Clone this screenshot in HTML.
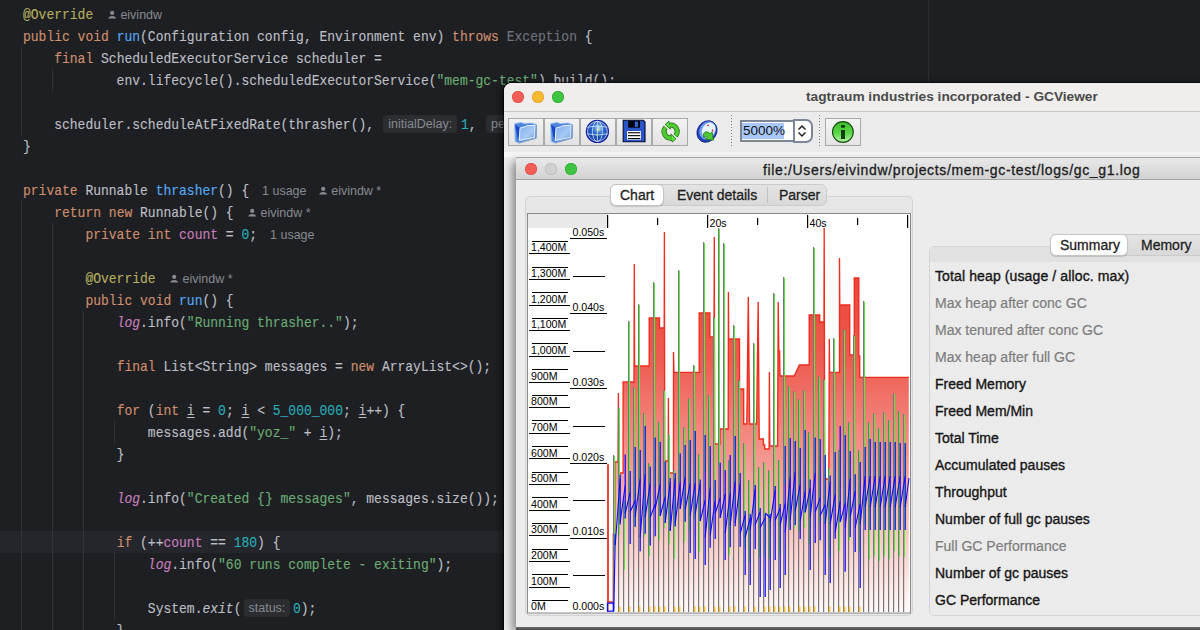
<!DOCTYPE html>
<html><head><meta charset="utf-8"><style>
*{margin:0;padding:0;box-sizing:border-box}
html,body{width:1200px;height:630px;overflow:hidden;background:#1E1F22}
#ed{position:absolute;left:0;top:0;width:1200px;height:630px;background:#1E1F22}
.cur{position:absolute;left:0;top:531px;width:1200px;height:22px;background:#24262B}
.margin{position:absolute;left:928px;top:0;width:1px;height:630px;background:#2B2D30}
.gd{position:absolute;width:1px;background:#313337}
#code{position:absolute;left:22.7px;top:0}
.ln{position:absolute;left:0;height:22px;line-height:22px;white-space:pre;font-family:"Liberation Mono",monospace;font-size:15px;color:#BCBEC4;transform:scaleX(0.8667);transform-origin:0 0;-webkit-text-stroke:0.15px currentColor}
.au{position:absolute;height:22px;line-height:22px;white-space:pre;font-family:"Liberation Sans",sans-serif;font-size:12.5px;color:#868A91}
.pi{position:absolute}
.inl{position:absolute;height:18px;line-height:18px;background:#2B2D30;color:#868A91;font-family:"Liberation Sans",sans-serif;font-size:12.5px;border-radius:4px;padding-left:5px;white-space:pre;overflow:hidden}
</style></head>
<body>
<div id="ed">
<div class="cur"></div>
<div class="margin"></div>
<div class="gd" style="left:21.0px;top:47px;height:88px"></div><div class="gd" style="left:21.0px;top:201px;height:429px"></div><div class="gd" style="left:52.0px;top:69px;height:22px"></div><div class="gd" style="left:52.0px;top:223px;height:407px"></div><div class="gd" style="left:83.0px;top:311px;height:319px"></div><div class="gd" style="left:114.0px;top:421px;height:22px"></div><div class="gd" style="left:114.0px;top:553px;height:66px"></div>
<div id="code"><div class="ln" style="top:5.0px"><span style="color:#B3AE60;">@Override</span></div>
<div class="ln" style="top:27.0px"><span style="color:#CF8E6D;">public void </span><span style="color:#56A8F5;">run</span>(Configuration config, Environment env) <span style="color:#CF8E6D;">throws </span><span style="color:#6F737A;">Exception</span> {</div>
<div class="ln" style="top:49.0px">    <span style="color:#CF8E6D;">final </span>ScheduledExecutorService scheduler =</div>
<div class="ln" style="top:71.0px">            env.lifecycle().scheduledExecutorService(<span style="color:#6AAB73;">&quot;mem-gc-test&quot;</span>).build();</div>
<div class="ln" style="top:115.0px">    scheduler.scheduleAtFixedRate(thrasher(),</div>
<div class="ln" style="top:137.0px">}</div>
<div class="ln" style="top:181.0px"><span style="color:#CF8E6D;">private </span>Runnable <span style="color:#56A8F5;">thrasher</span>() {</div>
<div class="ln" style="top:203.0px">    <span style="color:#CF8E6D;">return new </span>Runnable() {</div>
<div class="ln" style="top:225.0px">        <span style="color:#CF8E6D;">private int </span><span style="color:#C77DBB;">count</span> = <span style="color:#2AACB8;">0</span>;</div>
<div class="ln" style="top:269.0px">        <span style="color:#B3AE60;">@Override</span></div>
<div class="ln" style="top:291.0px">        <span style="color:#CF8E6D;">public void </span><span style="color:#56A8F5;">run</span>() {</div>
<div class="ln" style="top:313.0px">            <span style="color:#C77DBB;font-style:italic;">log</span>.info(<span style="color:#6AAB73;">&quot;Running thrasher..&quot;</span>);</div>
<div class="ln" style="top:357.0px">            <span style="color:#CF8E6D;">final </span>List&lt;String> messages = <span style="color:#CF8E6D;">new </span>ArrayList&lt;>();</div>
<div class="ln" style="top:401.0px">            <span style="color:#CF8E6D;">for </span>(<span style="color:#CF8E6D;">int </span><span style="text-decoration:underline;text-underline-offset:2px">i</span> = <span style="color:#2AACB8;">0</span>; <span style="text-decoration:underline;text-underline-offset:2px">i</span> &lt; <span style="color:#2AACB8;">5_000_000</span>; <span style="text-decoration:underline;text-underline-offset:2px">i</span>++) {</div>
<div class="ln" style="top:423.0px">                messages.add(<span style="color:#6AAB73;">&quot;yoz_&quot;</span> + <span style="text-decoration:underline;text-underline-offset:2px">i</span>);</div>
<div class="ln" style="top:445.0px">            }</div>
<div class="ln" style="top:489.0px">            <span style="color:#C77DBB;font-style:italic;">log</span>.info(<span style="color:#6AAB73;">&quot;Created {} messages&quot;</span>, messages.size());</div>
<div class="ln" style="top:533.0px">            <span style="color:#CF8E6D;">if </span>(++<span style="color:#C77DBB;">count</span> == <span style="color:#2AACB8;">180</span>) {</div>
<div class="ln" style="top:555.0px">                <span style="color:#C77DBB;font-style:italic;">log</span>.info(<span style="color:#6AAB73;">&quot;60 runs complete - exiting&quot;</span>);</div>
<div class="ln" style="top:599.0px">                System.<span style="color:#BCBEC4;font-style:italic;">exit</span>(</div>
<div class="ln" style="top:621.0px">            }</div>
<div class="ln" style="left:438.2px;top:115.0px"><span style="color:#2AACB8;">1</span>, </div>
<div class="ln" style="left:270.5px;top:599.0px"><span style="color:#2AACB8;">0</span>);</div></div>
<svg class="pi" style="left:107.9px;top:10px" width="9" height="9" viewBox="0 0 9 9"><circle cx="4.2" cy="2.9" r="2.1" fill="#868A91"/><path d="M0.3,8.6 Q0.6,5.9 4.2,5.9 Q7.8,5.9 8.1,8.6 Z" fill="#868A91"/></svg>
<div class="au" style="left:120.4px;top:4px">eivindw</div>
<div class="au" style="left:262.0px;top:180px">1 usage</div>
<svg class="pi" style="left:318.8px;top:186px" width="9" height="9" viewBox="0 0 9 9"><circle cx="4.2" cy="2.9" r="2.1" fill="#868A91"/><path d="M0.3,8.6 Q0.6,5.9 4.2,5.9 Q7.8,5.9 8.1,8.6 Z" fill="#868A91"/></svg>
<div class="au" style="left:331.2px;top:180px">eivindw *</div>
<svg class="pi" style="left:248.0px;top:208px" width="9" height="9" viewBox="0 0 9 9"><circle cx="4.2" cy="2.9" r="2.1" fill="#868A91"/><path d="M0.3,8.6 Q0.6,5.9 4.2,5.9 Q7.8,5.9 8.1,8.6 Z" fill="#868A91"/></svg>
<div class="au" style="left:260.5px;top:202px">eivindw *</div>
<div class="au" style="left:270.0px;top:224px">1 usage</div>
<svg class="pi" style="left:170.0px;top:274px" width="9" height="9" viewBox="0 0 9 9"><circle cx="4.2" cy="2.9" r="2.1" fill="#868A91"/><path d="M0.3,8.6 Q0.6,5.9 4.2,5.9 Q7.8,5.9 8.1,8.6 Z" fill="#868A91"/></svg>
<div class="au" style="left:182.5px;top:268px">eivindw *</div>
<div class="inl" style="left:383.3px;top:115px;width:74.0px">initialDelay:</div>
<div class="inl" style="left:486.0px;top:115px;width:74.0px">period:</div>
<div class="inl" style="left:243.5px;top:599px;width:46.5px">status:</div>
</div>
<div style="position:absolute;left:504px;top:83px;width:700px;height:560px;background:#ececec;border-radius:8px 0 0 0;box-shadow:-1px -1px 0 rgba(0,0,0,.55),-3px 0 6px rgba(0,0,0,.55);"></div>
<div style="position:absolute;left:504px;top:83px;width:700px;height:28px;background:#efeeed;border-radius:8px 0 0 0;"></div>
<div style="position:absolute;left:504px;top:111px;width:700px;height:1px;background:#c6c6c6;"></div>
<div style="position:absolute;left:512px;top:91px;width:12px;height:12px;border-radius:50%;background:#f25f58;box-shadow:inset 0 0 0 .6px #d94a43;"></div>
<div style="position:absolute;left:532px;top:91px;width:12px;height:12px;border-radius:50%;background:#f8b932;box-shadow:inset 0 0 0 .6px #db9d26;"></div>
<div style="position:absolute;left:552px;top:91px;width:12px;height:12px;border-radius:50%;background:#3ec440;box-shadow:inset 0 0 0 .6px #2aa52d;"></div>
<div style="position:absolute;left:806px;top:89px;white-space:nowrap;font-family:'Liberation Sans',sans-serif;font-size:13.7px;font-weight:bold;color:#4a4a4a;line-height:16px;">tagtraum industries incorporated - GCViewer</div>
<div style="position:absolute;left:504px;top:112px;width:700px;height:41px;background:#ebebeb;"></div>
<div style="position:absolute;left:504px;top:152px;width:700px;height:5px;background:#f6f6f6;"></div>
<div style="position:absolute;left:508px;top:118px;width:36px;height:28px;box-sizing:border-box;border:1px solid #a9a9a9;background:linear-gradient(#f2f2f2,#e2e2e2);"></div>
<div style="position:absolute;left:544px;top:118px;width:36px;height:28px;box-sizing:border-box;border:1px solid #a9a9a9;background:linear-gradient(#f2f2f2,#e2e2e2);"></div>
<div style="position:absolute;left:580px;top:118px;width:36px;height:28px;box-sizing:border-box;border:1px solid #a9a9a9;background:linear-gradient(#f2f2f2,#e2e2e2);"></div>
<div style="position:absolute;left:616px;top:118px;width:36px;height:28px;box-sizing:border-box;border:1px solid #a9a9a9;background:linear-gradient(#f2f2f2,#e2e2e2);"></div>
<div style="position:absolute;left:652px;top:118px;width:36px;height:28px;box-sizing:border-box;border:1px solid #a9a9a9;background:linear-gradient(#f2f2f2,#e2e2e2);"></div>
<div id="icons"></div>
<div style="position:absolute;left:731px;top:115px;width:1px;height:31px;background:repeating-linear-gradient(#777 0 1px,transparent 1px 3px);"></div>
<div style="position:absolute;left:819px;top:115px;width:1px;height:31px;background:repeating-linear-gradient(#777 0 1px,transparent 1px 3px);"></div>
<div style="position:absolute;left:740px;top:120px;width:54px;height:22px;box-sizing:border-box;border:2px solid #7d8696;border-right:1px solid #7d8696;background:#fff;"></div>
<div style="position:absolute;left:742px;top:123px;width:42px;height:16px;background:#a8c8fb;"></div>
<div style="position:absolute;left:743px;top:123px;white-space:nowrap;font-family:'Liberation Sans',sans-serif;font-size:13.5px;color:#111;line-height:16px;">5000%</div>
<div style="position:absolute;left:793px;top:119px;width:20px;height:24px;box-sizing:border-box;border:2px solid #7d8696;border-radius:0 7px 7px 0;background:#fff;"></div>
<svg style="position:absolute;left:796px;top:124px" width="12" height="14"><path d="M2.5 5.5 L6 2 L9.5 5.5 M2.5 8.5 L6 12 L9.5 8.5" fill="none" stroke="#222" stroke-width="1.5"/></svg>
<div style="position:absolute;left:825px;top:118px;width:36px;height:28px;box-sizing:border-box;border:1px solid #a9a9a9;background:linear-gradient(#f4f4f4,#e4e4e4);"></div>
<div style="position:absolute;left:516px;top:157px;width:700px;height:471px;background:#ececec;border-radius:5px 0 0 0;box-shadow:-4px 4px 9px rgba(0,0,0,.42);"></div>
<div style="position:absolute;left:516px;top:157px;width:700px;height:1.2px;background:#a9a9a9;border-radius:5px 0 0 0;"></div>
<div style="position:absolute;left:516px;top:158px;width:700px;height:21px;background:linear-gradient(#e9e9e9,#d2d2d2);border-radius:5px 0 0 0;"></div>
<div style="position:absolute;left:516px;top:179px;width:700px;height:1px;background:#a3a3a3;"></div>
<div style="position:absolute;left:525px;top:163px;width:12px;height:12px;border-radius:50%;background:#f25f58;box-shadow:inset 0 0 0 .6px #d94a43;"></div>
<div style="position:absolute;left:545px;top:163px;width:12px;height:12px;border-radius:50%;background:#d0d0d0;box-shadow:inset 0 0 0 .6px #b3b3b3;"></div>
<div style="position:absolute;left:565px;top:163px;width:12px;height:12px;border-radius:50%;background:#3ec440;box-shadow:inset 0 0 0 .6px #2aa52d;"></div>
<div style="position:absolute;left:763px;top:162px;white-space:nowrap;font-family:'Liberation Sans',sans-serif;font-size:14px;letter-spacing:0.65px;color:#1c1c1c;line-height:16px;-webkit-text-stroke:0.3px #1c1c1c;">file:/Users/eivindw/projects/mem-gc-test/logs/gc_g1.log</div>
<div style="position:absolute;left:516px;top:627px;width:700px;height:3px;background:linear-gradient(#6a6a6a,#4a4a4a);"></div>
<div style="position:absolute;left:525px;top:196px;width:388px;height:420px;box-sizing:border-box;border:1px solid #d4d4d4;border-radius:5px;background:#e6e6e6;"></div>
<div style="position:absolute;left:610px;top:184px;width:217px;height:22px;box-sizing:border-box;border:1px solid #cbcbcb;border-radius:6px;background:linear-gradient(#e3e3e3,#d9d9d9);"></div>
<div style="position:absolute;left:610px;top:184px;width:54px;height:22px;box-sizing:border-box;border:1px solid #c4c4c4;border-radius:6px;background:#fff;box-shadow:0 1px 1px rgba(0,0,0,.15);"></div>
<div style="position:absolute;left:767px;top:187px;width:1px;height:16px;background:#c2c2c2;"></div>
<div style="position:absolute;left:620px;top:187px;white-space:nowrap;font-family:'Liberation Sans',sans-serif;font-size:14px;color:#1e1e1e;line-height:16px;-webkit-text-stroke:0.3px #1e1e1e;">Chart</div>
<div style="position:absolute;left:677px;top:187px;white-space:nowrap;font-family:'Liberation Sans',sans-serif;font-size:14px;color:#1e1e1e;line-height:16px;-webkit-text-stroke:0.3px #1e1e1e;">Event details</div>
<div style="position:absolute;left:779px;top:187px;white-space:nowrap;font-family:'Liberation Sans',sans-serif;font-size:14px;color:#1e1e1e;line-height:16px;-webkit-text-stroke:0.3px #1e1e1e;">Parser</div>
<div style="position:absolute;left:929px;top:246px;width:300px;height:370px;box-sizing:border-box;border:1px solid #d4d4d4;border-radius:5px;background:#ebebeb;"></div>
<div style="position:absolute;left:930px;top:247px;width:300px;height:15px;background:#e1e1e1;"></div>
<div style="position:absolute;left:1050px;top:234px;width:160px;height:22px;box-sizing:border-box;border:1px solid #cbcbcb;border-radius:6px;background:linear-gradient(#e3e3e3,#d9d9d9);"></div>
<div style="position:absolute;left:1050px;top:234px;width:78px;height:22px;box-sizing:border-box;border:1px solid #c4c4c4;border-radius:6px;background:#fff;box-shadow:0 1px 1px rgba(0,0,0,.15);"></div>
<div style="position:absolute;left:1060px;top:237px;white-space:nowrap;font-family:'Liberation Sans',sans-serif;font-size:14px;color:#1e1e1e;line-height:16px;-webkit-text-stroke:0.3px #1e1e1e;">Summary</div>
<div style="position:absolute;left:1141px;top:237px;white-space:nowrap;font-family:'Liberation Sans',sans-serif;font-size:14px;color:#1e1e1e;line-height:16px;-webkit-text-stroke:0.3px #1e1e1e;">Memory</div>
<div style="position:absolute;left:935px;top:268px;white-space:nowrap;font-family:'Liberation Sans',sans-serif;font-size:14px;letter-spacing:0.12px;line-height:16px;color:#161616;-webkit-text-stroke:0.35px #161616;">Total heap (usage / alloc. max)</div>
<div style="position:absolute;left:935px;top:295px;white-space:nowrap;font-family:'Liberation Sans',sans-serif;font-size:14px;letter-spacing:0;line-height:16px;color:#7d7d7d;-webkit-text-stroke:0.2px #7d7d7d;">Max heap after conc GC</div>
<div style="position:absolute;left:935px;top:322px;white-space:nowrap;font-family:'Liberation Sans',sans-serif;font-size:14px;letter-spacing:0;line-height:16px;color:#7d7d7d;-webkit-text-stroke:0.2px #7d7d7d;">Max tenured after conc GC</div>
<div style="position:absolute;left:935px;top:349px;white-space:nowrap;font-family:'Liberation Sans',sans-serif;font-size:14px;letter-spacing:0;line-height:16px;color:#7d7d7d;-webkit-text-stroke:0.2px #7d7d7d;">Max heap after full GC</div>
<div style="position:absolute;left:935px;top:376px;white-space:nowrap;font-family:'Liberation Sans',sans-serif;font-size:14px;letter-spacing:0;line-height:16px;color:#161616;-webkit-text-stroke:0.35px #161616;">Freed Memory</div>
<div style="position:absolute;left:935px;top:403px;white-space:nowrap;font-family:'Liberation Sans',sans-serif;font-size:14px;letter-spacing:0;line-height:16px;color:#161616;-webkit-text-stroke:0.35px #161616;">Freed Mem/Min</div>
<div style="position:absolute;left:935px;top:430px;white-space:nowrap;font-family:'Liberation Sans',sans-serif;font-size:14px;letter-spacing:0;line-height:16px;color:#161616;-webkit-text-stroke:0.35px #161616;">Total Time</div>
<div style="position:absolute;left:935px;top:457px;white-space:nowrap;font-family:'Liberation Sans',sans-serif;font-size:14px;letter-spacing:0;line-height:16px;color:#161616;-webkit-text-stroke:0.35px #161616;">Accumulated pauses</div>
<div style="position:absolute;left:935px;top:484px;white-space:nowrap;font-family:'Liberation Sans',sans-serif;font-size:14px;letter-spacing:0;line-height:16px;color:#161616;-webkit-text-stroke:0.35px #161616;">Throughput</div>
<div style="position:absolute;left:935px;top:511px;white-space:nowrap;font-family:'Liberation Sans',sans-serif;font-size:14px;letter-spacing:0;line-height:16px;color:#161616;-webkit-text-stroke:0.35px #161616;">Number of full gc pauses</div>
<div style="position:absolute;left:935px;top:538px;white-space:nowrap;font-family:'Liberation Sans',sans-serif;font-size:14px;letter-spacing:0;line-height:16px;color:#7d7d7d;-webkit-text-stroke:0.2px #7d7d7d;">Full GC Performance</div>
<div style="position:absolute;left:935px;top:565px;white-space:nowrap;font-family:'Liberation Sans',sans-serif;font-size:14px;letter-spacing:0;line-height:16px;color:#161616;-webkit-text-stroke:0.35px #161616;">Number of gc pauses</div>
<div style="position:absolute;left:935px;top:592px;white-space:nowrap;font-family:'Liberation Sans',sans-serif;font-size:14px;letter-spacing:0;line-height:16px;color:#161616;-webkit-text-stroke:0.35px #161616;">GC Performance</div><svg style="position:absolute;left:527px;top:213px" width="384" height="401" viewBox="527 213 384 401" shape-rendering="auto">
<defs><linearGradient id="hg" x1="0" y1="228" x2="0" y2="612" gradientUnits="userSpaceOnUse"><stop offset="0" stop-color="#e8382b"/><stop offset="0.35" stop-color="#ee5d52"/><stop offset="0.65" stop-color="#f6a29c"/><stop offset="1" stop-color="#fffafa"/></linearGradient></defs>
<rect x="527.5" y="213.5" width="383" height="399.5" fill="#fff" stroke="#8a8a8a" stroke-width="1"/>
<rect x="528" y="214" width="79.5" height="14" fill="#e9e9e9"/>
<polygon points="607.8,612.0 607.8,465.0 608.2,465.0 608.2,602.0 613.3,602.0 613.3,534.0 614.8,534.0 614.8,462.0 618.0,462.0 618.4,393.0 618.8,473.0 623.1,473.0 623.1,382.0 634.0,382.0 634.3,264.0 634.6,366.0 649.2,366.0 649.2,318.0 659.5,318.0 659.5,328.0 664.2,328.0 664.4,232.0 664.7,461.0 668.2,461.0 668.4,398.0 668.7,473.0 673.5,473.0 673.5,352.0 674.0,372.4 699.2,372.4 699.2,313.0 709.9,313.0 709.9,337.0 714.0,337.0 714.3,237.0 714.7,444.0 720.0,444.0 720.0,429.0 728.2,429.0 728.4,292.0 728.7,339.0 739.5,339.0 739.5,389.0 743.7,389.0 743.7,424.0 746.8,424.0 748.3,297.0 749.6,424.0 756.6,424.0 758.2,302.0 759.2,439.0 763.4,439.0 763.4,445.0 764.7,445.0 764.7,449.0 769.1,449.0 769.4,372.0 769.8,446.0 773.0,446.0 777.6,446.0 778.2,302.0 778.8,351.0 779.6,351.0 780.0,376.0 794.2,376.0 799.4,365.0 809.2,365.0 809.2,315.0 819.7,315.0 819.7,322.0 824.0,322.0 824.2,228.0 824.7,479.0 828.8,479.0 829.3,339.0 829.6,372.4 839.5,372.4 839.5,258.0 839.8,305.0 849.7,305.0 849.7,355.0 854.3,355.0 854.3,278.0 858.8,278.0 858.8,356.0 859.7,356.0 859.7,377.3 908.8,377.3 908.8,612.0" fill="url(#hg)" stroke="none"/>
<polyline points="607.8,612.0 607.8,465.0 608.2,465.0 608.2,602.0 613.3,602.0 613.3,534.0 614.8,534.0 614.8,462.0 618.0,462.0 618.4,393.0 618.8,473.0 623.1,473.0 623.1,382.0 634.0,382.0 634.3,264.0 634.6,366.0 649.2,366.0 649.2,318.0 659.5,318.0 659.5,328.0 664.2,328.0 664.4,232.0 664.7,461.0 668.2,461.0 668.4,398.0 668.7,473.0 673.5,473.0 673.5,352.0 674.0,372.4 699.2,372.4 699.2,313.0 709.9,313.0 709.9,337.0 714.0,337.0 714.3,237.0 714.7,444.0 720.0,444.0 720.0,429.0 728.2,429.0 728.4,292.0 728.7,339.0 739.5,339.0 739.5,389.0 743.7,389.0 743.7,424.0 746.8,424.0 748.3,297.0 749.6,424.0 756.6,424.0 758.2,302.0 759.2,439.0 763.4,439.0 763.4,445.0 764.7,445.0 764.7,449.0 769.1,449.0 769.4,372.0 769.8,446.0 773.0,446.0 777.6,446.0 778.2,302.0 778.8,351.0 779.6,351.0 780.0,376.0 794.2,376.0 799.4,365.0 809.2,365.0 809.2,315.0 819.7,315.0 819.7,322.0 824.0,322.0 824.2,228.0 824.7,479.0 828.8,479.0 829.3,339.0 829.6,372.4 839.5,372.4 839.5,258.0 839.8,305.0 849.7,305.0 849.7,355.0 854.3,355.0 854.3,278.0 858.8,278.0 858.8,356.0 859.7,356.0 859.7,377.3 908.8,377.3" fill="none" stroke="#ee2b1c" stroke-width="1.35" stroke-linejoin="miter"/>
<rect x="613" y="455.0" width="1.2" height="157.0" fill="#777"/><rect x="618" y="407.0" width="1.2" height="205.0" fill="#777"/><rect x="623" y="500.0" width="1.2" height="112.0" fill="#777"/><rect x="628" y="321.0" width="1.2" height="291.0" fill="#777"/><rect x="633" y="387.0" width="1.2" height="225.0" fill="#777"/><rect x="638" y="304.0" width="1.2" height="308.0" fill="#777"/><rect x="643" y="413.0" width="1.2" height="199.0" fill="#777"/><rect x="648" y="463.0" width="1.2" height="149.0" fill="#777"/><rect x="653" y="282.0" width="1.2" height="330.0" fill="#777"/><rect x="658" y="422.0" width="1.2" height="190.0" fill="#777"/><rect x="663" y="390.0" width="1.2" height="222.0" fill="#777"/><rect x="668" y="434.0" width="1.2" height="178.0" fill="#777"/><rect x="673" y="470.0" width="1.2" height="142.0" fill="#777"/><rect x="678" y="270.0" width="1.2" height="342.0" fill="#777"/><rect x="683" y="427.0" width="1.2" height="185.0" fill="#777"/><rect x="688" y="398.0" width="1.2" height="214.0" fill="#777"/><rect x="693" y="365.0" width="1.2" height="247.0" fill="#777"/><rect x="698" y="454.0" width="1.2" height="158.0" fill="#777"/><rect x="703" y="242.0" width="1.2" height="370.0" fill="#777"/><rect x="708" y="395.0" width="1.2" height="217.0" fill="#777"/><rect x="713" y="317.0" width="1.2" height="295.0" fill="#777"/><rect x="718" y="228.0" width="1.2" height="384.0" fill="#777"/><rect x="723" y="243.0" width="1.2" height="369.0" fill="#777"/><rect x="728" y="460.0" width="1.2" height="152.0" fill="#777"/><rect x="733" y="325.0" width="1.2" height="287.0" fill="#777"/><rect x="738" y="380.0" width="1.2" height="232.0" fill="#777"/><rect x="743" y="443.0" width="1.2" height="169.0" fill="#777"/><rect x="748" y="480.0" width="1.2" height="132.0" fill="#777"/><rect x="753" y="343.0" width="1.2" height="269.0" fill="#777"/><rect x="758" y="467.0" width="1.2" height="145.0" fill="#777"/><rect x="763" y="462.0" width="1.2" height="150.0" fill="#777"/><rect x="768" y="470.0" width="1.2" height="142.0" fill="#777"/><rect x="773" y="293.0" width="1.2" height="319.0" fill="#777"/><rect x="778" y="460.0" width="1.2" height="152.0" fill="#777"/><rect x="783" y="277.0" width="1.2" height="335.0" fill="#777"/><rect x="788" y="386.0" width="1.2" height="226.0" fill="#777"/><rect x="793" y="391.0" width="1.2" height="221.0" fill="#777"/><rect x="798" y="399.0" width="1.2" height="213.0" fill="#777"/><rect x="803" y="390.0" width="1.2" height="222.0" fill="#777"/><rect x="808" y="432.0" width="1.2" height="180.0" fill="#777"/><rect x="813" y="247.0" width="1.2" height="365.0" fill="#777"/><rect x="818" y="376.0" width="1.2" height="236.0" fill="#777"/><rect x="823" y="379.0" width="1.2" height="233.0" fill="#777"/><rect x="828" y="468.0" width="1.2" height="144.0" fill="#777"/><rect x="833" y="338.0" width="1.2" height="274.0" fill="#777"/><rect x="838" y="450.0" width="1.2" height="162.0" fill="#777"/><rect x="843" y="329.0" width="1.2" height="283.0" fill="#777"/><rect x="848" y="422.0" width="1.2" height="190.0" fill="#777"/><rect x="853" y="335.0" width="1.2" height="277.0" fill="#777"/><rect x="858" y="450.0" width="1.2" height="162.0" fill="#777"/><rect x="863" y="301.0" width="1.2" height="311.0" fill="#777"/><rect x="868" y="422.0" width="1.2" height="190.0" fill="#777"/><rect x="873" y="413.0" width="1.2" height="199.0" fill="#777"/><rect x="878" y="428.0" width="1.2" height="184.0" fill="#777"/><rect x="883" y="412.0" width="1.2" height="200.0" fill="#777"/><rect x="888" y="420.0" width="1.2" height="192.0" fill="#777"/><rect x="893" y="393.0" width="1.2" height="219.0" fill="#777"/><rect x="898" y="411.0" width="1.2" height="201.0" fill="#777"/><rect x="903" y="414.0" width="1.2" height="198.0" fill="#777"/>
<rect x="614" y="456.0" width="1" height="96.7" fill="#55ea3c"/><rect x="619" y="408.0" width="1" height="126.5" fill="#55ea3c"/><rect x="624" y="501.0" width="1" height="68.8" fill="#55ea3c"/><rect x="629" y="322.0" width="1" height="179.8" fill="#55ea3c"/><rect x="634" y="388.0" width="1" height="138.9" fill="#55ea3c"/><rect x="639" y="305.0" width="1" height="190.3" fill="#55ea3c"/><rect x="644" y="414.0" width="1" height="122.8" fill="#55ea3c"/><rect x="649" y="464.0" width="1" height="91.8" fill="#55ea3c"/><rect x="654" y="283.0" width="1" height="204.0" fill="#55ea3c"/><rect x="659" y="423.0" width="1" height="117.2" fill="#55ea3c"/><rect x="664" y="391.0" width="1" height="137.0" fill="#55ea3c"/><rect x="669" y="435.0" width="1" height="109.7" fill="#55ea3c"/><rect x="674" y="471.0" width="1" height="87.4" fill="#55ea3c"/><rect x="679" y="271.0" width="1" height="211.4" fill="#55ea3c"/><rect x="684" y="428.0" width="1" height="114.1" fill="#55ea3c"/><rect x="689" y="399.0" width="1" height="132.1" fill="#55ea3c"/><rect x="694" y="366.0" width="1" height="152.5" fill="#55ea3c"/><rect x="699" y="455.0" width="1" height="97.3" fill="#55ea3c"/><rect x="704" y="243.0" width="1" height="228.8" fill="#55ea3c"/><rect x="709" y="396.0" width="1" height="133.9" fill="#55ea3c"/><rect x="714" y="318.0" width="1" height="182.3" fill="#55ea3c"/><rect x="719" y="229.0" width="1" height="237.5" fill="#55ea3c"/><rect x="724" y="244.0" width="1" height="228.2" fill="#55ea3c"/><rect x="729" y="461.0" width="1" height="93.6" fill="#55ea3c"/><rect x="734" y="326.0" width="1" height="177.3" fill="#55ea3c"/><rect x="739" y="381.0" width="1" height="143.2" fill="#55ea3c"/><rect x="744" y="444.0" width="1" height="104.2" fill="#55ea3c"/><rect x="749" y="481.0" width="1" height="81.2" fill="#55ea3c"/><rect x="754" y="344.0" width="1" height="166.2" fill="#55ea3c"/><rect x="759" y="468.0" width="1" height="89.3" fill="#55ea3c"/><rect x="764" y="463.0" width="1" height="92.4" fill="#55ea3c"/><rect x="769" y="471.0" width="1" height="87.4" fill="#55ea3c"/><rect x="774" y="294.0" width="1" height="197.2" fill="#55ea3c"/><rect x="779" y="461.0" width="1" height="93.6" fill="#55ea3c"/><rect x="784" y="278.0" width="1" height="207.1" fill="#55ea3c"/><rect x="789" y="387.0" width="1" height="139.5" fill="#55ea3c"/><rect x="794" y="392.0" width="1" height="136.4" fill="#55ea3c"/><rect x="799" y="400.0" width="1" height="131.4" fill="#55ea3c"/><rect x="804" y="391.0" width="1" height="137.0" fill="#55ea3c"/><rect x="809" y="433.0" width="1" height="111.0" fill="#55ea3c"/><rect x="814" y="248.0" width="1" height="225.7" fill="#55ea3c"/><rect x="819" y="377.0" width="1" height="145.7" fill="#55ea3c"/><rect x="824" y="380.0" width="1" height="143.8" fill="#55ea3c"/><rect x="829" y="469.0" width="1" height="88.7" fill="#55ea3c"/><rect x="834" y="339.0" width="1" height="169.3" fill="#55ea3c"/><rect x="839" y="451.0" width="1" height="99.8" fill="#55ea3c"/><rect x="844" y="330.0" width="1" height="174.8" fill="#55ea3c"/><rect x="849" y="423.0" width="1" height="117.2" fill="#55ea3c"/><rect x="854" y="336.0" width="1" height="171.1" fill="#55ea3c"/><rect x="859" y="451.0" width="1" height="99.8" fill="#55ea3c"/><rect x="864" y="302.0" width="1" height="223.2" fill="#55ea3c"/><rect x="869" y="423.0" width="1" height="136.1" fill="#55ea3c"/><rect x="874" y="414.0" width="1" height="142.6" fill="#55ea3c"/><rect x="879" y="429.0" width="1" height="131.8" fill="#55ea3c"/><rect x="884" y="413.0" width="1" height="143.3" fill="#55ea3c"/><rect x="889" y="421.0" width="1" height="137.5" fill="#55ea3c"/><rect x="894" y="394.0" width="1" height="157.0" fill="#55ea3c"/><rect x="899" y="412.0" width="1" height="144.0" fill="#55ea3c"/><rect x="904" y="415.0" width="1" height="141.8" fill="#55ea3c"/>
<path d="M607.5,603H613.3V611H607.5ZM615.2,534.0V545.0M620.2,474.6V524.4M625.2,454.4V518.6M630.2,471.0V544.0M635.2,447.0V526.8M640.2,450.0V551.3M645.2,426.0V533.7M650.2,466.5V545.5M655.2,437.5V536.3M660.2,442.0V515.8M665.2,461.4V522.7M670.2,478.0V531.0M675.2,473.1V526.5M680.2,453.5V508.7M685.2,445.0V521.7M690.2,440.0V553.1M695.2,431.0V559.1M700.2,479.4V521.0M705.2,435.0V564.9M710.2,446.0V547.8M715.2,480.0V538.9M720.2,462.7V517.9M725.2,470.0V560.0M730.2,455.0V547.2M735.2,436.0V526.3M740.2,473.0V547.0M745.2,511.0V575.0M750.2,514.0V585.0M755.2,485.0V549.0M760.2,508.0V597.0M765.2,514.0V597.0M770.2,514.0V590.0M775.2,486.0V560.0M780.2,504.0V588.0M785.2,446.0V575.0M790.2,438.0V530.0M795.2,441.0V525.0M800.2,448.0V539.0M805.2,430.0V512.3M810.2,479.4V570.0M815.2,437.5V543.0M820.2,439.0V540.2M825.2,455.1V575.0M830.2,475.4V583.0M835.2,452.0V538.8M840.2,426.0V522.0M845.2,435.0V571.7M850.2,451.0V537.0M855.2,474.2V552.0M860.2,462.1V588.0M865.2,447.0V530.0M870.2,439.0V530.0M875.2,442.0V530.0M880.2,442.0V530.0M885.2,442.0V530.0M890.2,442.0V530.0M895.2,442.0V530.0M900.2,443.0V530.0M905.2,443.0V530.0" fill="none" stroke="#0a0aff" stroke-width="1.25"/>
<path d="M613.8,611.0L615.2,540.0M615.2,545.0L620.2,478.6M620.2,522.1L625.2,485.5M625.2,513.5L630.2,492.4M630.2,511.8L635.2,500.8M635.2,516.7L640.2,478.5M640.2,537.0L645.2,474.1M645.2,517.0L650.2,483.7M650.2,517.2L655.2,504.2M655.2,508.7L660.2,484.4M660.2,515.8L665.2,496.9M665.2,522.7L670.2,482.0M670.2,530.5L675.2,478.9M675.2,523.4L680.2,482.3M680.2,508.7L685.2,477.3M685.2,509.5L690.2,483.3M690.2,515.5L695.2,483.0M695.2,514.2L700.2,483.4M700.2,521.0L705.2,500.1M705.2,537.3L710.2,487.5M710.2,535.1L715.2,500.6M715.2,513.4L720.2,497.9M720.2,517.9L725.2,494.1M725.2,533.1L730.2,493.4M730.2,525.4L735.2,481.5M735.2,523.0L740.2,483.6M740.2,533.3L745.2,515.0M745.2,537.4L750.2,518.0M750.2,529.9L755.2,489.0M755.2,524.6L760.2,512.0M760.2,527.5L765.2,518.0M765.2,513.0L770.2,518.0M770.2,522.0L775.2,490.0M775.2,520.2L780.2,508.0M780.2,524.5L785.2,503.6M785.2,532.6L790.2,477.2M790.2,519.5L795.2,472.0M795.2,511.2L800.2,484.4M800.2,521.0L805.2,491.7M805.2,512.3L810.2,488.2M810.2,516.6L815.2,473.3M815.2,512.1L820.2,497.8M820.2,515.4L825.2,504.8M825.2,523.5L830.2,481.9M830.2,524.0L835.2,494.5M835.2,532.4L840.2,501.3M840.2,522.0L845.2,503.5M845.2,527.5L850.2,478.5M850.2,516.9L855.2,491.2M855.2,527.5L860.2,504.1M860.2,524.1L865.2,476.0M865.2,507.0L870.2,476.0M870.2,507.0L875.2,476.0M875.2,507.0L880.2,476.0M880.2,507.0L885.2,476.0M885.2,507.0L890.2,476.0M890.2,507.0L895.2,476.0M895.2,507.0L900.2,476.0M900.2,507.0L905.2,476.0M905.2,507.0L909,478" fill="none" stroke="#0a0aff" stroke-width="1.1"/>
<rect x="618.8" y="606.5" width="1.6" height="5.5" fill="#f7bd30"/><rect x="628.8" y="606.5" width="1.6" height="5.5" fill="#f7bd30"/><rect x="638.8" y="606.5" width="1.6" height="5.5" fill="#f7bd30"/><rect x="648.8" y="606.5" width="1.6" height="5.5" fill="#f7bd30"/><rect x="653.8" y="606.5" width="1.6" height="5.5" fill="#f7bd30"/><rect x="658.8" y="606.5" width="1.6" height="5.5" fill="#f7bd30"/><rect x="663.8" y="606.5" width="1.6" height="5.5" fill="#f7bd30"/><rect x="673.8" y="606.5" width="1.6" height="5.5" fill="#f7bd30"/><rect x="678.8" y="606.5" width="1.6" height="5.5" fill="#f7bd30"/><rect x="693.8" y="606.5" width="1.6" height="5.5" fill="#f7bd30"/><rect x="698.8" y="606.5" width="1.6" height="5.5" fill="#f7bd30"/><rect x="703.8" y="606.5" width="1.6" height="5.5" fill="#f7bd30"/><rect x="713.8" y="606.5" width="1.6" height="5.5" fill="#f7bd30"/><rect x="718.8" y="606.5" width="1.6" height="5.5" fill="#f7bd30"/><rect x="728.8" y="606.5" width="1.6" height="5.5" fill="#f7bd30"/><rect x="733.8" y="606.5" width="1.6" height="5.5" fill="#f7bd30"/><rect x="743.8" y="606.5" width="1.6" height="5.5" fill="#f7bd30"/><rect x="753.8" y="606.5" width="1.6" height="5.5" fill="#f7bd30"/><rect x="763.8" y="606.5" width="1.6" height="5.5" fill="#f7bd30"/><rect x="768.8" y="606.5" width="1.6" height="5.5" fill="#f7bd30"/><rect x="773.8" y="606.5" width="1.6" height="5.5" fill="#f7bd30"/><rect x="778.8" y="606.5" width="1.6" height="5.5" fill="#f7bd30"/><rect x="783.8" y="606.5" width="1.6" height="5.5" fill="#f7bd30"/><rect x="788.8" y="606.5" width="1.6" height="5.5" fill="#f7bd30"/><rect x="798.8" y="606.5" width="1.6" height="5.5" fill="#f7bd30"/><rect x="803.8" y="606.5" width="1.6" height="5.5" fill="#f7bd30"/><rect x="808.8" y="606.5" width="1.6" height="5.5" fill="#f7bd30"/><rect x="813.8" y="606.5" width="1.6" height="5.5" fill="#f7bd30"/><rect x="828.8" y="606.5" width="1.6" height="5.5" fill="#f7bd30"/><rect x="838.8" y="606.5" width="1.6" height="5.5" fill="#f7bd30"/><rect x="843.8" y="606.5" width="1.6" height="5.5" fill="#f7bd30"/><rect x="848.8" y="606.5" width="1.6" height="5.5" fill="#f7bd30"/><rect x="858.8" y="606.5" width="1.6" height="5.5" fill="#f7bd30"/>
<rect x="532" y="600" width="36" height="1" fill="#000"/><text x="531" y="610.4" style="font-family:'Liberation Sans',sans-serif;font-size:10.6px;fill:#000">0M</text><rect x="529" y="587" width="41" height="1" fill="#000"/><rect x="532" y="574" width="36" height="1" fill="#000"/><text x="531" y="584.8" style="font-family:'Liberation Sans',sans-serif;font-size:10.6px;fill:#000">100M</text><rect x="529" y="561" width="41" height="1" fill="#000"/><rect x="532" y="549" width="36" height="1" fill="#000"/><text x="531" y="559.1" style="font-family:'Liberation Sans',sans-serif;font-size:10.6px;fill:#000">200M</text><rect x="529" y="535" width="41" height="1" fill="#000"/><rect x="532" y="523" width="36" height="1" fill="#000"/><text x="531" y="533.4" style="font-family:'Liberation Sans',sans-serif;font-size:10.6px;fill:#000">300M</text><rect x="529" y="510" width="41" height="1" fill="#000"/><rect x="532" y="497" width="36" height="1" fill="#000"/><text x="531" y="507.8" style="font-family:'Liberation Sans',sans-serif;font-size:10.6px;fill:#000">400M</text><rect x="529" y="484" width="41" height="1" fill="#000"/><rect x="532" y="472" width="36" height="1" fill="#000"/><text x="531" y="482.1" style="font-family:'Liberation Sans',sans-serif;font-size:10.6px;fill:#000">500M</text><rect x="529" y="458" width="41" height="1" fill="#000"/><rect x="532" y="446" width="36" height="1" fill="#000"/><text x="531" y="456.5" style="font-family:'Liberation Sans',sans-serif;font-size:10.6px;fill:#000">600M</text><rect x="529" y="433" width="41" height="1" fill="#000"/><rect x="532" y="420" width="36" height="1" fill="#000"/><text x="531" y="430.9" style="font-family:'Liberation Sans',sans-serif;font-size:10.6px;fill:#000">700M</text><rect x="529" y="407" width="41" height="1" fill="#000"/><rect x="532" y="395" width="36" height="1" fill="#000"/><text x="531" y="405.2" style="font-family:'Liberation Sans',sans-serif;font-size:10.6px;fill:#000">800M</text><rect x="529" y="382" width="41" height="1" fill="#000"/><rect x="532" y="369" width="36" height="1" fill="#000"/><text x="531" y="379.5" style="font-family:'Liberation Sans',sans-serif;font-size:10.6px;fill:#000">900M</text><rect x="529" y="356" width="41" height="1" fill="#000"/><rect x="532" y="343" width="36" height="1" fill="#000"/><text x="531" y="353.9" style="font-family:'Liberation Sans',sans-serif;font-size:10.6px;fill:#000">1,000M</text><rect x="529" y="330" width="41" height="1" fill="#000"/><rect x="532" y="318" width="36" height="1" fill="#000"/><text x="531" y="328.2" style="font-family:'Liberation Sans',sans-serif;font-size:10.6px;fill:#000">1,100M</text><rect x="529" y="305" width="41" height="1" fill="#000"/><rect x="532" y="292" width="36" height="1" fill="#000"/><text x="531" y="302.6" style="font-family:'Liberation Sans',sans-serif;font-size:10.6px;fill:#000">1,200M</text><rect x="529" y="279" width="41" height="1" fill="#000"/><rect x="532" y="267" width="36" height="1" fill="#000"/><text x="531" y="276.9" style="font-family:'Liberation Sans',sans-serif;font-size:10.6px;fill:#000">1,300M</text><rect x="529" y="253" width="41" height="1" fill="#000"/><rect x="532" y="241" width="36" height="1" fill="#000"/><text x="531" y="251.3" style="font-family:'Liberation Sans',sans-serif;font-size:10.6px;fill:#000">1,400M</text><text x="572.5" y="610.2" style="font-family:'Liberation Sans',sans-serif;font-size:10.6px;fill:#000">0.000s</text><rect x="573" y="575" width="32" height="1" fill="#000"/><rect x="570" y="538" width="37" height="1" fill="#000"/><text x="572.5" y="535.4" style="font-family:'Liberation Sans',sans-serif;font-size:10.6px;fill:#000">0.010s</text><rect x="573" y="500" width="32" height="1" fill="#000"/><rect x="570" y="463" width="37" height="1" fill="#000"/><text x="572.5" y="460.5" style="font-family:'Liberation Sans',sans-serif;font-size:10.6px;fill:#000">0.020s</text><rect x="573" y="426" width="32" height="1" fill="#000"/><rect x="570" y="388" width="37" height="1" fill="#000"/><text x="572.5" y="385.7" style="font-family:'Liberation Sans',sans-serif;font-size:10.6px;fill:#000">0.030s</text><rect x="573" y="351" width="32" height="1" fill="#000"/><rect x="570" y="313" width="37" height="1" fill="#000"/><text x="572.5" y="310.8" style="font-family:'Liberation Sans',sans-serif;font-size:10.6px;fill:#000">0.040s</text><rect x="573" y="276" width="32" height="1" fill="#000"/><rect x="570" y="238" width="37" height="1" fill="#000"/><text x="572.5" y="236.0" style="font-family:'Liberation Sans',sans-serif;font-size:10.6px;fill:#000">0.050s</text>
<rect x="607.0" y="215" width="1.2" height="13" fill="#000"/><rect x="657.0" y="218" width="1.2" height="7" fill="#000"/><rect x="707.0" y="215" width="1.2" height="13" fill="#000"/><rect x="757.0" y="218" width="1.2" height="7" fill="#000"/><rect x="807.0" y="215" width="1.2" height="13" fill="#000"/><rect x="857.0" y="218" width="1.2" height="7" fill="#000"/><rect x="907.0" y="215" width="1.2" height="13" fill="#000"/><text x="709.5" y="226.5" style="font-family:'Liberation Sans',sans-serif;font-size:10.6px;fill:#000">20s</text><text x="809.5" y="226.5" style="font-family:'Liberation Sans',sans-serif;font-size:10.6px;fill:#000">40s</text>
</svg><svg style="position:absolute;left:500px;top:112px" width="380" height="40" viewBox="500 112 380 40">
<defs>
<linearGradient id="fold" x1="0" y1="0" x2="1" y2="1"><stop offset="0" stop-color="#7fb0ee"/><stop offset="0.6" stop-color="#a6c9f3"/><stop offset="1" stop-color="#6d9fe6"/></linearGradient>
<radialGradient id="glb" cx="0.55" cy="0.35" r="0.7"><stop offset="0" stop-color="#b8e0f0"/><stop offset="0.35" stop-color="#2f6fd0"/><stop offset="1" stop-color="#0b2a9c"/></radialGradient>
<linearGradient id="grn" x1="0" y1="0" x2="1" y2="1"><stop offset="0" stop-color="#72f050"/><stop offset="1" stop-color="#2aa81a"/></linearGradient>
<linearGradient id="info" x1="0" y1="0" x2="0" y2="1"><stop offset="0" stop-color="#3fbf2c"/><stop offset="0.55" stop-color="#5ad648"/><stop offset="1" stop-color="#b6f5a6"/></linearGradient>
<g id="folder">
 <path d="M514.6,123.6 L521.2,122.4 L524,123.4 L532,123 L536.6,124.6 L536.2,138 L518.6,143 L515.2,141.5 Z" fill="#4f86dc" stroke="#9fc6f2" stroke-width="0.9"/>
 <path d="M536.6,125 L536.2,138.3 L519,143.3" fill="none" stroke="#3a4f70" stroke-width="0.6" opacity="0.6"/>
 <path d="M515,124.8 L520,128.1 L518.4,140.6 Z" fill="#1747c8"/>
 <path d="M520,128.1 L525.2,126.6 L526.6,125.8 L535.1,125.2 L534.5,137.3 L519.2,140.6 Z" fill="url(#fold)" stroke="#f4f9ff" stroke-width="0.9"/>
</g>
</defs>
<use href="#folder"/>
<use href="#folder" x="36"/>
<!-- globe -->
<circle cx="597.4" cy="131.4" r="11" fill="url(#glb)" stroke="#13229a" stroke-width="1.3"/>
<g fill="none" stroke="#dfefff" stroke-width="0.8" opacity="0.9">
<ellipse cx="597.4" cy="131.4" rx="5" ry="10.2"/>
<path d="M587.3,127.2 Q597.4,124.8 607.5,127.2 M587,133.8 Q597.4,136.2 607.8,133.8 M597.4,121 L597.4,141.8"/>
<circle cx="597.4" cy="131.4" r="9.9"/>
</g>
<circle cx="598.5" cy="129.9" r="0.9" fill="#e8f060"/>
<circle cx="597" cy="134.8" r="0.9" fill="#b8d860"/>
<!-- floppy -->
<path d="M623.2,120.3 L643.3,120.3 L645,122 L645,141.8 L623.2,141.8 Z" fill="#2a55c8" stroke="#06082a" stroke-width="1.1"/>
<rect x="628.2" y="120.8" width="11.8" height="6.9" fill="#050510"/>
<rect x="634.9" y="121.6" width="3" height="5.2" fill="#2f6fe0"/>
<rect x="627.1" y="131" width="13.8" height="8.7" fill="#fff"/>
<rect x="628" y="132.2" width="12.2" height="1.1" fill="#000"/>
<rect x="628" y="135.1" width="12.2" height="1.1" fill="#000"/>
<rect x="628" y="138" width="12.2" height="1.1" fill="#000"/>
<!-- refresh -->
<g stroke-linecap="butt">
<path d="M669.5,125.2 A6.5,6.5 0 0 1 675.6,135.8" fill="none" stroke="#1d6a12" stroke-width="5"/>
<path d="M671.7,138 A6.5,6.5 0 0 1 665.6,127.4" fill="none" stroke="#1d6a12" stroke-width="5"/>
<polygon points="665.2,124.4 669,121.2 670.4,129.2" fill="#5ee040" stroke="#1d6a12" stroke-width="0.8" stroke-linejoin="round"/>
<polygon points="676,138.8 672.2,142 670.8,134" fill="#5ee040" stroke="#1d6a12" stroke-width="0.8" stroke-linejoin="round"/>
<path d="M669.5,125.2 A6.5,6.5 0 0 1 675.6,135.8" fill="none" stroke="#4ccc2e" stroke-width="3.6"/>
<path d="M671.7,138 A6.5,6.5 0 0 1 665.6,127.4" fill="none" stroke="#4ccc2e" stroke-width="3.6"/>
<polygon points="666.4,124.4 668.9,122.4 669.8,127.8" fill="#5ee040"/>
<polygon points="674.8,138.8 672.3,140.8 671.4,135.4" fill="#5ee040"/>
</g>
<!-- blue/green icon -->
<ellipse cx="707" cy="131.5" rx="9.6" ry="11.2" transform="rotate(32 707 131.5)" fill="#2140c0" stroke="#0e1f80" stroke-width="0.8"/>
<ellipse cx="707.6" cy="130.6" rx="8" ry="9.6" transform="rotate(32 707.6 130.6)" fill="#6f9ce8"/>
<ellipse cx="708.6" cy="130.2" rx="6.3" ry="8" transform="rotate(32 708.6 130.2)" fill="#e6f2fc"/>
<path d="M706.5,125.5 L708.5,124.6 L709.2,126.4 Z" fill="#c02a2a"/>
<path d="M712.6,129 L713.8,131.2 L711.6,131.2 Z" fill="#c02a2a"/>
<path d="M703.4,133.8 Q706.2,129.8 710.2,133.6 L712.2,131.8 L713.4,140.2 L705.4,139.4 L707.6,137.4 Q706,135.4 703.8,137.6 Z" fill="#4cc832" stroke="#1a6a10" stroke-width="0.7" stroke-linejoin="round"/>
<!-- info -->
<circle cx="842.9" cy="132" r="10.4" fill="url(#info)" stroke="#134a0c" stroke-width="1.1"/>
<ellipse cx="843" cy="126.3" rx="2.3" ry="1.6" fill="#124010"/>
<rect x="841" y="130" width="4" height="9" fill="#124010"/>
</svg></body></html>
